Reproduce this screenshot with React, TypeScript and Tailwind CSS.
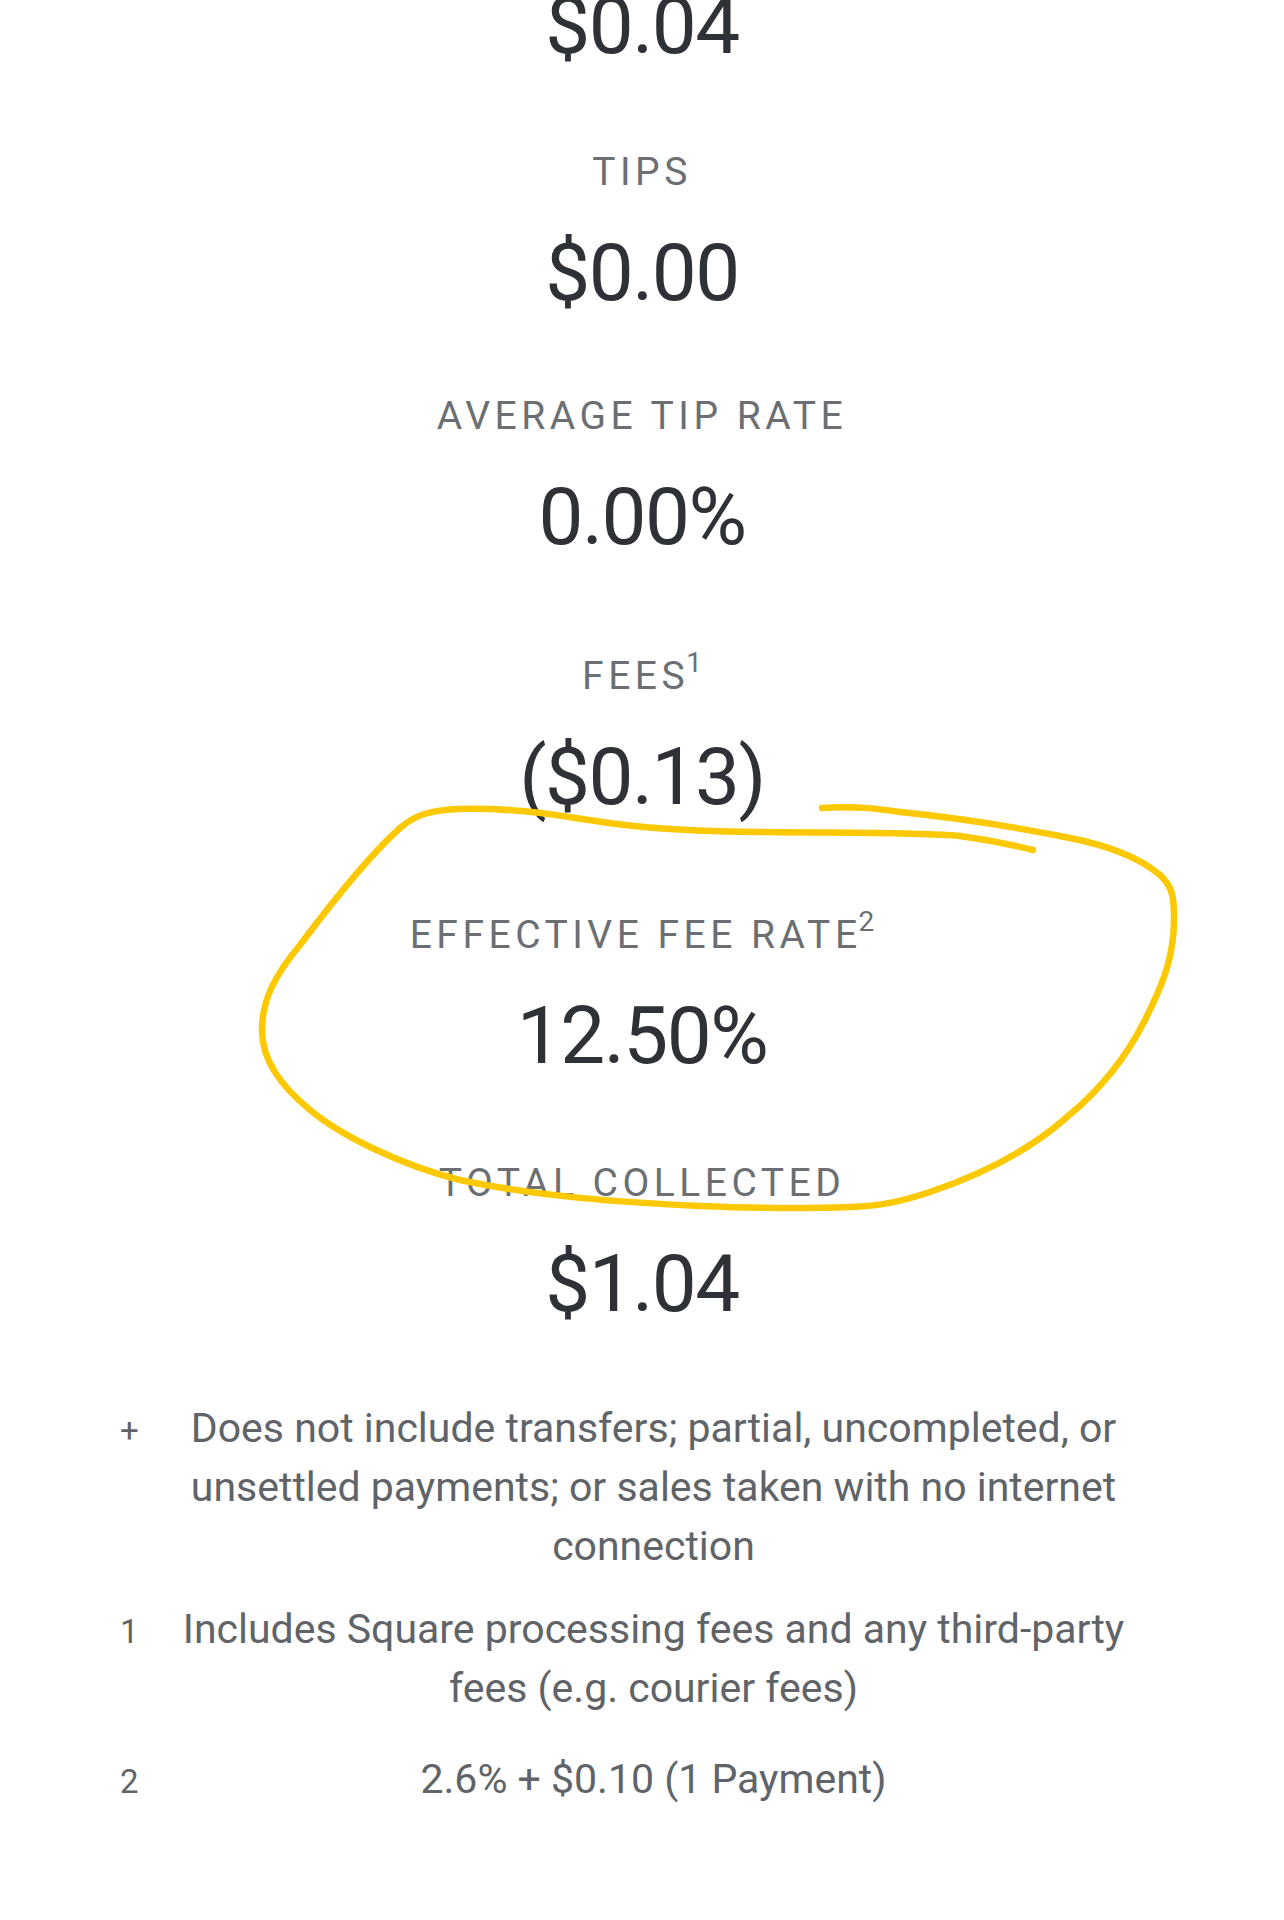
import React from 'react';

type Stat = { label: string; sup?: string; value: string; top: string };

const STATS: Stat[] = [
    { label: 'TIPS', value: '$0.00', top: 'mt-[87px]' },
    { label: 'AVERAGE TIP RATE', value: '0.00%', top: 'mt-[84px]' },
    { label: 'FEES', sup: '1', value: '($0.13)', top: 'mt-[100px]' },
    { label: 'EFFECTIVE FEE RATE', sup: '2', value: '12.50%', top: 'mt-[99px]' },
    { label: 'TOTAL COLLECTED', value: '$1.04', top: 'mt-[88px]' },
];

const NOTES = [
    { mark: '+', top: '', lines: ['Does not include transfers; partial, uncompleted, or', 'unsettled payments; or sales taken with no internet', 'connection'] },
    { mark: '1', top: 'mt-[24px]', lines: ['Includes Square processing fees and any third-party', 'fees (e.g. courier fees)'] },
    { mark: '2', top: 'mt-[32px]', lines: ['2.6% + $0.10 (1 Payment)'] },
];

const Value = ({ children, className = '' }: { children: React.ReactNode; className?: string }) => (
    <div className={`text-[80px] leading-[80px] tracking-[-1.5px] text-[#2e3236] ${className}`}>{children}</div>
);

export default function App() {
    return (
        <div className="relative w-full h-[1920px] overflow-hidden bg-white font-['Roboto',sans-serif]">
            <div className="flex flex-col items-center text-center">
                <Value className="-mt-[14px]">$0.04</Value>
                {STATS.map((s) => (
                    <React.Fragment key={s.label}>
                        <div className={`${s.top} text-[39px] leading-[39px] tracking-[4.5px] text-[#6b6f73]`}>
                            {s.label}
                            {s.sup && <sup className="relative -top-[17px] -ml-[3px] text-[28px] tracking-normal">{s.sup}</sup>}
                        </div>
                        <Value className="mt-[41px]">{s.value}</Value>
                    </React.Fragment>
                ))}
            </div>

            <div className="mt-[75px] flex flex-col pl-[120px] pr-[147px] text-[#606468]">
                {NOTES.map((n) => (
                    <div key={n.mark} className={`flex items-baseline ${n.top}`}>
                        <div className="w-[50px] shrink-0 text-[33px]">{n.mark}</div>
                        <p className="flex-1 text-center text-[41px] leading-[59px]">
                            {n.lines.map((l, i) => (
                                <React.Fragment key={i}>
                                    {i > 0 && <br />}
                                    {l}
                                </React.Fragment>
                            ))}
                        </p>
                    </div>
                ))}
            </div>

            {/* hand-drawn highlight */}
            <svg className="pointer-events-none absolute inset-0" width="1284" height="1920" viewBox="0 0 1284 1920" fill="none">
                <path
                    d="M822,808 C860,806 880,809 900,812 C960,818 1020,828 1070,838 C1110,846 1140,858 1160,875 C1174,888 1174,900 1174,920 C1174,960 1160,990 1145,1020 C1125,1060 1100,1090 1067,1117 C1030,1150 980,1175 930,1192 C900,1202 880,1206 850,1207 C800,1209 750,1208 700,1206 C620,1202 540,1197 460,1180 C400,1165 340,1135 310,1110 C280,1085 262,1060 262,1030 C262,1000 275,975 300,945 C330,905 370,855 400,828 C415,815 430,810 460,809 C500,808 540,812 575,818 C620,825 660,831 759,832 C850,833 920,832 960,836 C990,840 1005,843 1033,850"
                    stroke="#fcc900"
                    strokeWidth="6.5"
                    strokeLinecap="round"
                    strokeLinejoin="round"
                />
            </svg>
        </div>
    );
}
